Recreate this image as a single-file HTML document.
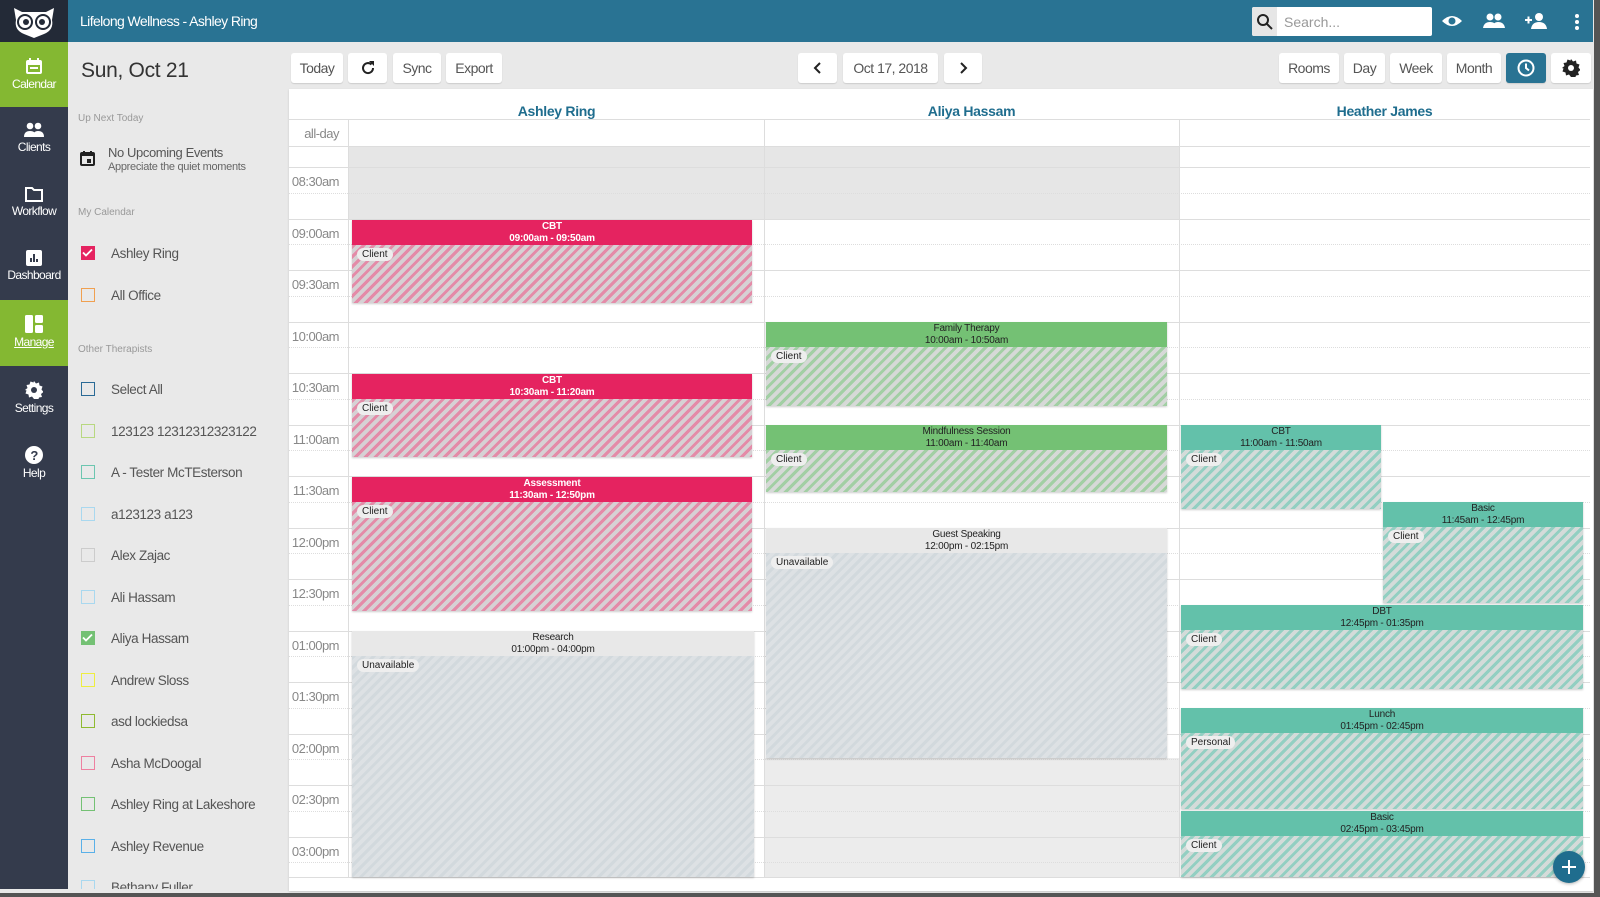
<!DOCTYPE html>
<html><head><meta charset="utf-8"><style>
*{box-sizing:border-box;margin:0;padding:0}
body{width:1600px;height:897px;overflow:hidden;background:#e9e9e9;font-family:"Liberation Sans",sans-serif;position:relative;color:#333}
.a{position:absolute}
#hdr{left:0;top:0;width:1593px;height:42px;background:#297393}
#logo{left:0;top:0;width:68px;height:42px;background:#232a37}
#nav{left:0;top:42px;width:68px;height:847px;background:#343b4c}
.nv{position:absolute;left:0;width:68px;height:65px;color:#fff;font-size:12px;text-align:center;letter-spacing:-0.6px}
.nv svg{display:block;margin:15px auto 2px}
.green{background:#84b832}
.btn{position:absolute;top:53px;height:30px;background:#fff;border-radius:3px;font-size:14px;color:#555;text-align:center;line-height:30px;box-shadow:0 1px 1px rgba(0,0,0,.12);letter-spacing:-0.5px}
.cb{position:absolute;left:81px;width:14px;height:14px;border:1.5px solid}
.it{position:absolute;left:111px;font-size:13.5px;color:#555;letter-spacing:-0.4px}
.lbl{position:absolute;left:289px;width:50px;text-align:right;font-size:13px;color:#888;letter-spacing:-0.5px}
.hl{position:absolute;left:289px;width:1301px;height:0;border-top:1px solid #ddd}
.dl{position:absolute;left:289px;width:1301px;height:0;border-top:1px dotted #ddd}
.ev{position:absolute;box-shadow:0 1px 2px rgba(0,0,0,.2)}
.eh{height:25px;text-align:center;font-size:10px;line-height:12px;padding-top:1px;letter-spacing:-0.2px}
.pill{position:absolute;left:5px;top:28px;font-size:10px;background:#eee;border-radius:7px;padding:1px 5px;color:#222}
.pk .eh{background:#e52360;color:#fff;font-weight:bold}
.pk .bd{background:repeating-linear-gradient(135deg,#e48ba8 0 3px,#d6d1d4 3px 7px)}
.gr .eh{background:#74c174;color:#222}
.gr .bd{background:repeating-linear-gradient(135deg,#a2cfa4 0 3px,#d6d9d7 3px 7px)}
.tl .eh{background:#63c1aa;color:#222}
.tl .bd{background:repeating-linear-gradient(135deg,#93cfc2 0 3px,#d4dbd9 3px 7px)}
.gy .eh{background:#e8e8e8;color:#222}
.gy .bd{background:repeating-linear-gradient(135deg,#d2d9dd 0 3px,#dde1e4 3px 7px)}
.bd{position:absolute;left:0;right:0;top:25px;bottom:0}
</style></head><body>
<div class="a" id="hdr"></div>
<div class="a" id="logo"><svg width="68" height="42" viewBox="0 0 68 42"><path d="M14 8 L22 12 L46 12 L54 8 L52 20 Q54 30 44 34 L34 38 L24 34 Q14 30 16 20Z" fill="#fff"/><circle cx="25" cy="22" r="8" fill="#232a37"/><circle cx="43" cy="22" r="8" fill="#232a37"/><circle cx="25" cy="22" r="6" fill="#fff"/><circle cx="43" cy="22" r="6" fill="#fff"/><circle cx="26" cy="22" r="3" fill="#232a37"/><circle cx="42" cy="22" r="3" fill="#232a37"/></svg></div>
<div class="a" style="left:80px;top:13px;color:#fff;font-size:14px;letter-spacing:-0.6px">Lifelong Wellness - Ashley Ring</div>
<div class="a" style="left:1252px;top:7px;width:180px;height:29px;background:#fff;border-radius:2px"></div>
<div class="a" style="left:1252px;top:7px;width:25px;height:29px;background:#e6e6e6;border-radius:2px 0 0 2px"><svg width="25" height="29"><circle cx="11" cy="13" r="5" stroke="#222" stroke-width="2" fill="none"/><path d="M15 17l5 5" stroke="#222" stroke-width="2"/></svg></div>
<div class="a" style="left:1284px;top:14px;font-size:14px;color:#999">Search...</div>
<svg class="a" style="left:1441px;top:12px" width="22" height="18"><path d="M1 9Q11 -1 21 9Q11 19 1 9Z" fill="#fff"/><circle cx="11" cy="9" r="3.5" fill="#297393"/></svg>
<svg class="a" style="left:1483px;top:12px" width="22" height="18"><circle cx="7" cy="5" r="3.5" fill="#fff"/><circle cx="15" cy="5" r="3.5" fill="#fff"/><path d="M0 16Q1 10 7 10Q13 10 14 16Z M9 16Q10 10 15 10Q21 10 22 16Z" fill="#fff"/></svg>
<svg class="a" style="left:1524px;top:12px" width="24" height="18"><path d="M1 8h7M4.5 4.5v7" stroke="#fff" stroke-width="2"/><circle cx="15" cy="5" r="4" fill="#fff"/><path d="M7 17Q8 10 15 10Q22 10 23 17Z" fill="#fff"/></svg>
<svg class="a" style="left:1574px;top:13px" width="6" height="18"><circle cx="3" cy="3" r="2" fill="#fff"/><circle cx="3" cy="9" r="2" fill="#fff"/><circle cx="3" cy="15" r="2" fill="#fff"/></svg>

<div class="a" id="nav"></div>
<div class="nv green" style="top:42px"><svg width="18" height="18"><rect x="1" y="3" width="16" height="14" rx="2" fill="#fff"/><rect x="3" y="8" width="12" height="7" fill="#84b832"/><path d="M5 1v4M13 1v4" stroke="#fff" stroke-width="2"/><rect x="5" y="10" width="8" height="2" fill="#fff"/></svg>Calendar</div>
<div class="nv" style="top:107px"><svg width="20" height="16"><circle cx="6" cy="4" r="3.3" fill="#fff"/><circle cx="14" cy="4" r="3.3" fill="#fff"/><path d="M0 15Q0 9 6 9Q12 9 12 15Z M9 15Q9 9 14 9Q20 9 20 15Z" fill="#fff"/></svg>Clients</div>
<div class="nv" style="top:171px"><svg width="18" height="16"><path d="M1 2h6l2 2h8v11H1Z" fill="none" stroke="#fff" stroke-width="2"/></svg>Workflow</div>
<div class="nv" style="top:235px"><svg width="16" height="16"><rect width="16" height="16" rx="2" fill="#fff"/><path d="M5 12V8M8 12V4M11 12V9" stroke="#343b4c" stroke-width="2"/></svg>Dashboard</div>
<div class="nv green" style="top:300px;height:66px;text-decoration:underline"><svg width="18" height="18"><rect x="0" y="0" width="8" height="18" rx="1.5" fill="#fff"/><rect x="10" y="0" width="8" height="8" rx="1.5" fill="#fff"/><rect x="10" y="10" width="8" height="8" rx="1.5" fill="#fff"/></svg>Manage</div>
<div class="nv" style="top:366px"><svg width="18" height="18" viewBox="0 0 18 18"><path d="M9 0l2 2.5 3-1 .5 3 3 1-1 3 2 2.5-2.5 2 1 3-3 .5-1 3-3-1L9 18l-2-2.5-3 1-.5-3-3-1 1-3L0 9l2.5-2-1-3 3-.5 1-3 3 1Z" fill="#fff"/><circle cx="9" cy="9" r="3" fill="#343b4c"/></svg>Settings</div>
<div class="nv" style="top:431px"><svg width="18" height="18"><circle cx="9" cy="9" r="9" fill="#fff"/><text x="9" y="14" text-anchor="middle" font-size="13" font-weight="bold" fill="#343b4c" font-family="Liberation Sans">?</text></svg>Help</div>

<div class="a" style="left:81px;top:59px;font-size:21px;color:#333;letter-spacing:-0.3px">Sun, Oct 21</div>
<div class="a" style="left:78px;top:113px;font-size:10px;color:#999">Up Next Today</div>
<svg class="a" style="left:80px;top:150px" width="15" height="16"><rect x="1" y="3" width="13" height="12" rx="1" fill="none" stroke="#222" stroke-width="2"/><rect x="1" y="3" width="13" height="3" fill="#222"/><rect x="7" y="9" width="4" height="4" fill="#222"/><path d="M4 1v3M11 1v3" stroke="#222" stroke-width="2"/></svg>
<div class="a" style="left:108px;top:145px;font-size:13px;color:#555;letter-spacing:-0.4px">No Upcoming Events</div>
<div class="a" style="left:108px;top:161px;font-size:11px;color:#666;letter-spacing:-0.3px">Appreciate the quiet moments</div>
<div class="a" style="left:78px;top:207px;font-size:10px;color:#999">My Calendar</div>
<div class="cb" style="top:246px;border-color:#e52360;background:#e52360"><svg width="11" height="11" style="position:absolute;left:0;top:0"><path d="M1 5.5l3 3 6-6" stroke="#fff" stroke-width="1.8" fill="none"/></svg></div><div class="it" style="top:246px">Ashley Ring</div>
<div class="cb" style="top:288px;border-color:#f0a050"></div><div class="it" style="top:288px">All Office</div>
<div class="a" style="left:78px;top:344px;font-size:10px;color:#999">Other Therapists</div>
<div class="cb" style="top:382px;border-color:#2a6a96"></div><div class="it" style="top:382px">Select All</div>
<div class="cb" style="top:424px;border-color:#b8d880"></div><div class="it" style="top:424px">123123 12312312323122</div>
<div class="cb" style="top:465px;border-color:#6cc6b0"></div><div class="it" style="top:465px">A - Tester McTEsterson</div>
<div class="cb" style="top:507px;border-color:#a9d8ef"></div><div class="it" style="top:507px">a123123 a123</div>
<div class="cb" style="top:548px;border-color:#ccc"></div><div class="it" style="top:548px">Alex Zajac</div>
<div class="cb" style="top:590px;border-color:#a9d8ef"></div><div class="it" style="top:590px">Ali Hassam</div>
<div class="cb" style="top:631px;border-color:#74c174;background:#74c174"><svg width="11" height="11" style="position:absolute;left:0;top:0"><path d="M1 5.5l3 3 6-6" stroke="#fff" stroke-width="1.8" fill="none"/></svg></div><div class="it" style="top:631px">Aliya Hassam</div>
<div class="cb" style="top:673px;border-color:#eeee40"></div><div class="it" style="top:673px">Andrew Sloss</div>
<div class="cb" style="top:714px;border-color:#8fba30"></div><div class="it" style="top:714px">asd lockiedsa</div>
<div class="cb" style="top:756px;border-color:#ee80a0"></div><div class="it" style="top:756px">Asha McDoogal</div>
<div class="cb" style="top:797px;border-color:#74c174"></div><div class="it" style="top:797px">Ashley Ring at Lakeshore</div>
<div class="cb" style="top:839px;border-color:#5ab0e8"></div><div class="it" style="top:839px">Ashley Revenue</div>
<div class="cb" style="top:880px;border-color:#a9d8ef"></div><div class="it" style="top:880px">Bethany Fuller</div>
<div class="a" style="left:0;top:889px;width:288px;height:8px;background:#e9e9e9"></div>

<div class="btn" style="left:291px;width:52px">Today</div>
<div class="btn" style="left:348px;width:39px"><svg width="16" height="16" style="margin-top:7px"><path d="M13 8A5 5 0 1 1 11.5 4.5" stroke="#222" stroke-width="2" fill="none"/><path d="M9 1h5v5Z" fill="#222"/></svg></div>
<div class="btn" style="left:393px;width:48px">Sync</div>
<div class="btn" style="left:446px;width:56px">Export</div>
<div class="btn" style="left:798px;width:39px"><svg width="10" height="12" style="margin-top:9px"><path d="M7 1L2 6l5 5" stroke="#222" stroke-width="2" fill="none"/></svg></div>
<div class="btn" style="left:843px;width:95px">Oct 17, 2018</div>
<div class="btn" style="left:944px;width:38px"><svg width="10" height="12" style="margin-top:9px"><path d="M3 1l5 5-5 5" stroke="#222" stroke-width="2" fill="none"/></svg></div>
<div class="btn" style="left:1279px;width:60px">Rooms</div>
<div class="btn" style="left:1344px;width:41px">Day</div>
<div class="btn" style="left:1390px;width:52px">Week</div>
<div class="btn" style="left:1447px;width:54px">Month</div>
<div class="btn" style="left:1506px;width:40px;background:#297393"><svg width="18" height="18" style="margin-top:6px"><circle cx="9" cy="9" r="7.5" stroke="#fff" stroke-width="2" fill="none"/><path d="M9 4.5V9l3 2.5" stroke="#fff" stroke-width="2" fill="none"/></svg></div>
<div class="btn" style="left:1551px;width:40px"><svg width="18" height="18" viewBox="0 0 18 18" style="margin-top:6px"><path d="M9 0l2 2.5 3-1 .5 3 3 1-1 3 2 2.5-2.5 2 1 3-3 .5-1 3-3-1L9 18l-2-2.5-3 1-.5-3-3-1 1-3L0 9l2.5-2-1-3 3-.5 1-3 3 1Z" fill="#222"/><circle cx="9" cy="9" r="3" fill="#fff"/></svg></div>

<div class="a" style="left:289px;top:89px;width:1304px;height:802px;background:#fff;box-shadow:0 1px 2px rgba(0,0,0,.15)"></div>
<div class="a" style="left:349px;top:103px;width:415px;text-align:center;font-size:14px;font-weight:bold;color:#1f6d8e;letter-spacing:-0.3px">Ashley Ring</div>
<div class="a" style="left:764px;top:103px;width:415px;text-align:center;font-size:14px;font-weight:bold;color:#1f6d8e;letter-spacing:-0.3px">Aliya Hassam</div>
<div class="a" style="left:1179px;top:103px;width:411px;text-align:center;font-size:14px;font-weight:bold;color:#1f6d8e;letter-spacing:-0.3px">Heather James</div>
<div class="hl" style="top:119px"></div>
<div class="lbl" style="top:126px">all-day</div>
<div class="hl" style="top:146px"></div>
<div class="a" style="left:349px;top:147px;width:830px;height:72px;background:#e6e6e6"></div>
<div class="a" style="left:764px;top:758px;width:415px;height:119px;background:#ececec"></div>
<div class="hl" style="top:167px"></div><div class="dl" style="top:193px"></div>
<div class="hl" style="top:219px"></div><div class="dl" style="top:244px"></div>
<div class="hl" style="top:270px"></div><div class="dl" style="top:296px"></div>
<div class="hl" style="top:322px"></div><div class="dl" style="top:347px"></div>
<div class="hl" style="top:373px"></div><div class="dl" style="top:399px"></div>
<div class="hl" style="top:425px"></div><div class="dl" style="top:450px"></div>
<div class="hl" style="top:476px"></div><div class="dl" style="top:502px"></div>
<div class="hl" style="top:528px"></div><div class="dl" style="top:553px"></div>
<div class="hl" style="top:579px"></div><div class="dl" style="top:605px"></div>
<div class="hl" style="top:631px"></div><div class="dl" style="top:656px"></div>
<div class="hl" style="top:682px"></div><div class="dl" style="top:708px"></div>
<div class="hl" style="top:734px"></div><div class="dl" style="top:759px"></div>
<div class="hl" style="top:785px"></div><div class="dl" style="top:811px"></div>
<div class="hl" style="top:837px"></div><div class="dl" style="top:862px"></div>
<div class="hl" style="top:877px"></div>
<div class="a" style="left:348px;top:119px;width:1px;height:758px;background:#ddd"></div>
<div class="a" style="left:764px;top:119px;width:1px;height:758px;background:#ddd"></div>
<div class="a" style="left:1179px;top:119px;width:1px;height:758px;background:#ddd"></div>
<div class="lbl" style="top:174px">08:30am</div>
<div class="lbl" style="top:226px">09:00am</div>
<div class="lbl" style="top:277px">09:30am</div>
<div class="lbl" style="top:329px">10:00am</div>
<div class="lbl" style="top:380px">10:30am</div>
<div class="lbl" style="top:432px">11:00am</div>
<div class="lbl" style="top:483px">11:30am</div>
<div class="lbl" style="top:535px">12:00pm</div>
<div class="lbl" style="top:586px">12:30pm</div>
<div class="lbl" style="top:638px">01:00pm</div>
<div class="lbl" style="top:689px">01:30pm</div>
<div class="lbl" style="top:741px">02:00pm</div>
<div class="lbl" style="top:792px">02:30pm</div>
<div class="lbl" style="top:844px">03:00pm</div>

<div class="ev pk" style="left:352px;top:220px;width:400px;height:83px"><div class="eh">CBT<br>09:00am - 09:50am</div><div class="bd"></div><span class="pill">Client</span></div>
<div class="ev pk" style="left:352px;top:374px;width:400px;height:83px"><div class="eh">CBT<br>10:30am - 11:20am</div><div class="bd"></div><span class="pill">Client</span></div>
<div class="ev pk" style="left:352px;top:477px;width:400px;height:134px"><div class="eh">Assessment<br>11:30am - 12:50pm</div><div class="bd"></div><span class="pill">Client</span></div>
<div class="ev gy" style="left:352px;top:631px;width:402px;height:246px"><div class="eh">Research<br>01:00pm - 04:00pm</div><div class="bd"></div><span class="pill">Unavailable</span></div>
<div class="ev gr" style="left:766px;top:322px;width:401px;height:84px"><div class="eh">Family Therapy<br>10:00am - 10:50am</div><div class="bd"></div><span class="pill">Client</span></div>
<div class="ev gr" style="left:766px;top:425px;width:401px;height:67px"><div class="eh">Mindfulness Session<br>11:00am - 11:40am</div><div class="bd"></div><span class="pill">Client</span></div>
<div class="ev gy" style="left:766px;top:528px;width:401px;height:230px"><div class="eh">Guest Speaking<br>12:00pm - 02:15pm</div><div class="bd"></div><span class="pill">Unavailable</span></div>
<div class="ev tl" style="left:1181px;top:425px;width:200px;height:84px"><div class="eh">CBT<br>11:00am - 11:50am</div><div class="bd"></div><span class="pill">Client</span></div>
<div class="ev tl" style="left:1383px;top:502px;width:200px;height:101px"><div class="eh">Basic<br>11:45am - 12:45pm</div><div class="bd"></div><span class="pill">Client</span></div>
<div class="ev tl" style="left:1181px;top:605px;width:402px;height:84px"><div class="eh">DBT<br>12:45pm - 01:35pm</div><div class="bd"></div><span class="pill">Client</span></div>
<div class="ev tl" style="left:1181px;top:708px;width:402px;height:101px"><div class="eh">Lunch<br>01:45pm - 02:45pm</div><div class="bd"></div><span class="pill">Personal</span></div>
<div class="ev tl" style="left:1181px;top:811px;width:402px;height:66px"><div class="eh">Basic<br>02:45pm - 03:45pm</div><div class="bd"></div><span class="pill">Client</span></div>
<div class="a" style="left:1553px;top:851px;width:32px;height:32px;border-radius:50%;background:#1f6d8e;box-shadow:0 1px 3px rgba(0,0,0,.3)"><svg width="32" height="32"><path d="M16 9v14M9 16h14" stroke="#fff" stroke-width="2"/></svg></div>
<div class="a" style="left:0;top:893px;width:1600px;height:4px;background:#555"></div>
<div class="a" style="left:1594px;top:0;width:6px;height:897px;background:#555"></div>
</body></html>
